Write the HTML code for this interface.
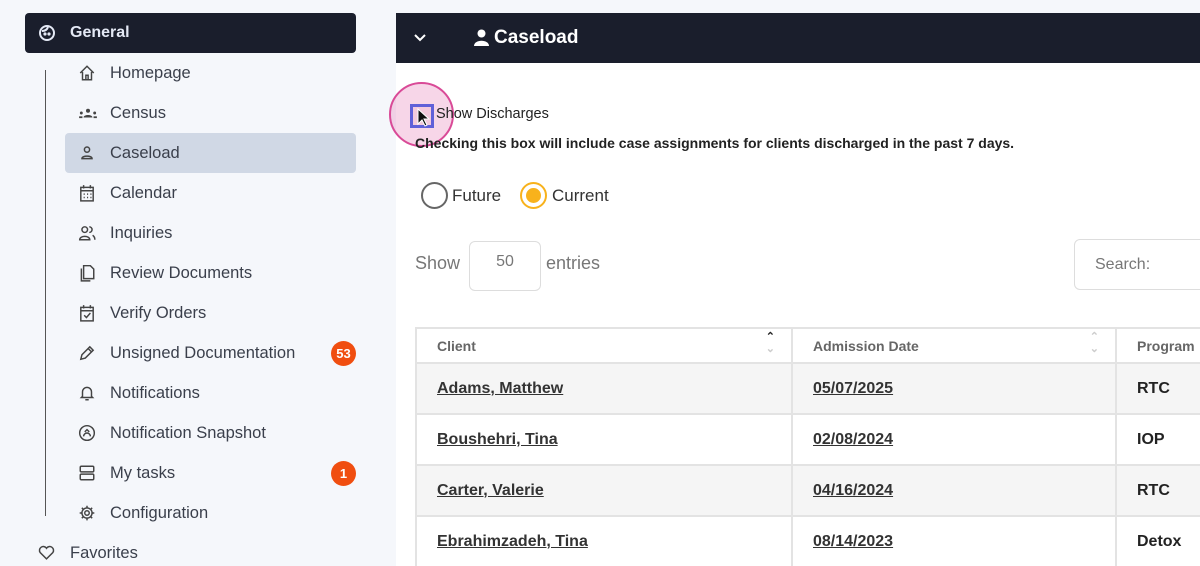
<!DOCTYPE html>
<html><head><style>
*{box-sizing:border-box;margin:0;padding:0}
html,body{width:1200px;height:566px;overflow:hidden}
body{background:#f5f7fb;font-family:"Liberation Sans",sans-serif;position:relative}
.abs{position:absolute}
.gen{left:25px;top:13px;width:331px;height:40px;background:#1a1e2c;border-radius:4px;color:#e4e9f5;font-weight:bold;font-size:16px;line-height:40px;padding-left:45px}
.vline{left:45px;top:70px;width:1px;height:446px;background:#555}
.item{left:65px;width:291px;height:40px;line-height:40px;padding-left:45px;font-size:16.5px;color:#3a3f4b;border-radius:4px}
.item svg{position:absolute;left:13px;top:11px}
.sel{background:#d0d8e5}
.badge{position:absolute;right:0;top:8px;width:25px;height:25px;border-radius:50%;background:#f04e10;color:#fff;font-size:13px;font-weight:bold;text-align:center;line-height:25px}
.main{left:396px;top:13px;width:804px;height:553px;background:#fff;overflow:hidden}
.hdr{left:396px;top:13px;width:804px;height:50px;background:#1a1e2c;color:#fff}
table{position:absolute;left:415px;top:327px;border-collapse:collapse;width:900px;font-size:16px}
td,th{border:2px solid #e3e3e3;padding:0 20px;text-align:left}
th{height:35px;font-size:14px;color:#666;font-weight:bold}
td{height:51px;color:#222;font-weight:bold}
tr.g td{background:#f5f5f5}
td a{color:#333;text-decoration:underline}
</style></head><body>
<div class="abs gen"><svg class="abs" style="left:13px;top:11px" width="18" height="18" viewBox="0 0 18 18" fill="none" stroke="#e4e9f5" stroke-width="2"><circle cx="9" cy="9" r="7"/><path d="M4 7c3 0 5-1 6-4"/><circle cx="7" cy="10" r=".6" fill="#e4e9f5"/><circle cx="11" cy="10" r=".6" fill="#e4e9f5"/></svg>General</div>
<div class="abs vline"></div>
<div class="abs item" style="top:53px"><svg width="18" height="18" viewBox="0 0 16 16" fill="none" stroke="#444" stroke-width="1.3"><path d="M2 8L8 2l6 6M4 7v7h8V7M7 14v-4h2v4"/></svg>Homepage</div>
<div class="abs item" style="top:93px"><svg width="20" height="18" viewBox="0 0 18 16" fill="#444"><circle cx="9" cy="6" r="1.8"/><circle cx="3" cy="8" r="1.3"/><circle cx="15" cy="8" r="1.3"/><path d="M5 12c0-3 8-3 8 0z"/><rect x="1" y="11" width="3" height="1.6"/><rect x="14" y="11" width="3" height="1.6"/></svg>Census</div>
<div class="abs item sel" style="top:133px"><svg width="18" height="18" viewBox="0 0 16 16" fill="none" stroke="#444" stroke-width="1.3"><circle cx="8" cy="5" r="2.3"/><path d="M3.5 13c0-3 9-3 9 0z"/></svg>Caseload</div>
<div class="abs item" style="top:173px"><svg width="18" height="18" viewBox="0 0 16 16" fill="none" stroke="#444" stroke-width="1.3"><rect x="2.5" y="3" width="11" height="12"/><path d="M2.5 6h11M5 1v3M11 1v3M5 9h1M8 9h1M11 9h1M5 12h1M8 12h1M11 12h1"/></svg>Calendar</div>
<div class="abs item" style="top:213px"><svg width="18" height="18" viewBox="0 0 16 16" fill="none" stroke="#444" stroke-width="1.3"><circle cx="6" cy="5" r="2.5"/><path d="M1.5 14c0-4 9-4 9 0zM10 2.5a2.5 2.5 0 010 5M13 10c1.5 1 2 2.5 2 4"/></svg>Inquiries</div>
<div class="abs item" style="top:253px"><svg width="18" height="18" viewBox="0 0 16 16" fill="none" stroke="#444" stroke-width="1.3"><path d="M5 1.5h6l3 3v8.5H5zM3 4v11h8"/></svg>Review Documents</div>
<div class="abs item" style="top:293px"><svg width="18" height="18" viewBox="0 0 16 16" fill="none" stroke="#444" stroke-width="1.3"><rect x="2.5" y="3" width="11" height="12"/><path d="M5 1v3M11 1v3M2.5 6h11M5.5 10l2 2 3.5-4"/></svg>Verify Orders</div>
<div class="abs item" style="top:333px"><svg width="18" height="18" viewBox="0 0 16 16" fill="none" stroke="#444" stroke-width="1.3"><path d="M2.5 13.5l1-4 7-7 3 3-7 7zM9 4l3 3"/></svg>Unsigned Documentation<span class="badge">53</span></div>
<div class="abs item" style="top:373px"><svg width="18" height="18" viewBox="0 0 16 16" fill="none" stroke="#444" stroke-width="1.3"><path d="M4 11V7a4 4 0 018 0v4l1 1H3zM6.5 14h3"/></svg>Notifications</div>
<div class="abs item" style="top:413px"><svg width="18" height="18" viewBox="0 0 16 16" fill="none" stroke="#444" stroke-width="1.3"><circle cx="8" cy="8" r="6.5"/><path d="M5 11a3 3 0 016 0M6 7l2-2 2 2"/></svg>Notification Snapshot</div>
<div class="abs item" style="top:453px"><svg width="18" height="18" viewBox="0 0 16 16" fill="none" stroke="#444" stroke-width="1.3"><rect x="2" y="2" width="12" height="5" rx="1"/><rect x="2" y="9" width="12" height="5" rx="1"/></svg>My tasks<span class="badge">1</span></div>
<div class="abs item" style="top:493px"><svg width="18" height="18" viewBox="0 0 16 16" fill="none" stroke="#444" stroke-width="1.3"><circle cx="8" cy="8" r="2"/><path d="M8 1.5v2M8 12.5v2M1.5 8h2M12.5 8h2M3.4 3.4l1.4 1.4M11.2 11.2l1.4 1.4M3.4 12.6l1.4-1.4M11.2 4.8l1.4-1.4"/><circle cx="8" cy="8" r="4.5"/></svg>Configuration</div>
<div class="abs" style="left:38px;top:533px;font-size:16.5px;color:#3a3f4b;line-height:40px;padding-left:32px"><svg class="abs" style="left:0;top:11px" width="17" height="17" viewBox="0 0 16 16" fill="none" stroke="#444" stroke-width="1.4"><path d="M8 14L2 8a3.3 3.3 0 016-4 3.3 3.3 0 016 4z"/></svg>Favorites</div>

<div class="abs main"></div>
<div class="abs hdr"><svg class="abs" style="left:17px;top:20px" width="14" height="10" viewBox="0 0 14 10" fill="none" stroke="#fff" stroke-width="2"><path d="M2 2l5 5 5-5"/></svg>
<svg class="abs" style="left:78px;top:16px" width="15" height="17" viewBox="0 0 15 17" fill="#fff"><circle cx="7.5" cy="4.5" r="4"/><path d="M0 17c0-7 15-7 15 0z"/></svg>
<span class="abs" style="left:98px;top:14px;font-size:19px;font-weight:bold">Caseload</span></div>

<div class="abs" style="left:389px;top:82px;width:65px;height:65px;border-radius:50%;background:rgba(230,120,180,.3);border:2px solid #d94a97"></div>
<div class="abs" style="left:410px;top:104px;width:24px;height:24px;border:3px solid #6060d8;background:rgba(240,190,210,.5)"></div>
<svg class="abs" style="left:417px;top:108px" width="14" height="20" viewBox="0 0 14 20"><path d="M1 1v15l4-4 3 6 2-1-3-6h5z" fill="#111" stroke="#fff" stroke-width="1"/></svg>
<div class="abs" style="left:436px;top:106px;font-size:14.5px;color:#222">Show Discharges</div>
<div class="abs" style="left:415px;top:135px;font-size:14px;color:#222;font-weight:bold">Checking this box will include case assignments for clients discharged in the past 7 days.</div>
<div class="abs" style="left:421px;top:182px;width:27px;height:27px;border-radius:50%;border:2px solid #666"></div>
<div class="abs" style="left:452px;top:186px;font-size:17px;color:#333">Future</div>
<div class="abs" style="left:520px;top:182px;width:27px;height:27px;border-radius:50%;border:2px solid #f8b21c;padding:4px"><div style="width:15px;height:15px;border-radius:50%;background:#f8b21c"></div></div>
<div class="abs" style="left:552px;top:186px;font-size:17px;color:#333">Current</div>
<div class="abs" style="left:415px;top:253px;font-size:18px;color:#777">Show</div>
<div class="abs" style="left:469px;top:241px;width:72px;height:50px;border:1px solid #ddd;border-radius:6px;text-align:center;line-height:40px;font-size:16px;color:#777">50</div>
<div class="abs" style="left:546px;top:253px;font-size:18px;color:#777">entries</div>
<div class="abs" style="left:1074px;top:239px;width:140px;height:51px;border:1px solid #ddd;border-radius:6px;padding-left:20px;line-height:50px;font-size:16px;color:#777">Search:</div>

<table>
<tr><th style="width:376px;position:relative">Client<span class="abs" style="right:16px;top:2px;font-size:11px;color:#222;line-height:12px">⌃<br><span style="color:#ccc">⌄</span></span></th><th style="width:324px;position:relative">Admission Date<span class="abs" style="right:16px;top:2px;font-size:11px;color:#ccc;line-height:12px">⌃<br>⌄</span></th><th>Program</th></tr>
<tr class="g"><td><a>Adams, Matthew</a></td><td><a>05/07/2025</a></td><td>RTC</td></tr>
<tr><td><a>Boushehri, Tina</a></td><td><a>02/08/2024</a></td><td>IOP</td></tr>
<tr class="g"><td><a>Carter, Valerie</a></td><td><a>04/16/2024</a></td><td>RTC</td></tr>
<tr><td><a>Ebrahimzadeh, Tina</a></td><td><a>08/14/2023</a></td><td>Detox</td></tr>
</table>
</body></html>
